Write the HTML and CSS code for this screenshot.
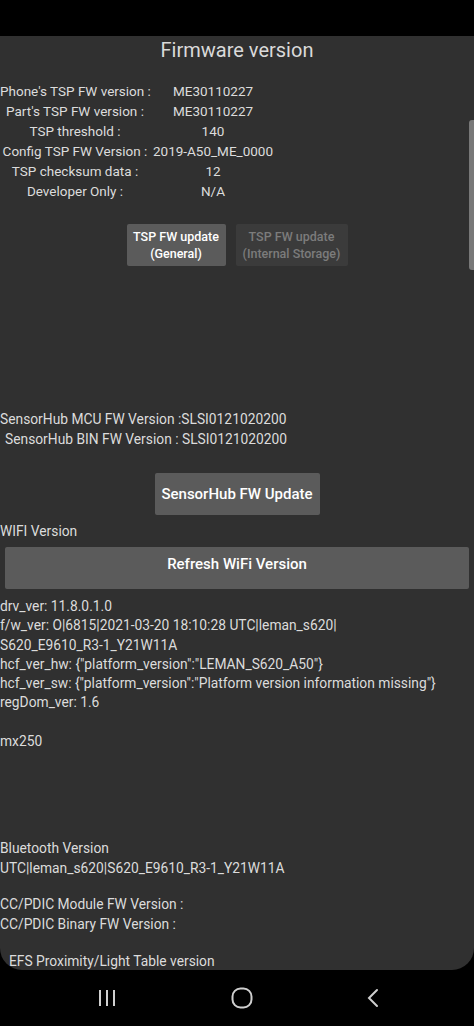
FILE: index.html
```html
<!DOCTYPE html>
<html>
<head>
<meta charset="utf-8">
<link rel="stylesheet" href="styles.css">
</head>
<body>
<div class="status"></div>
<div class="panel">
  <div class="title">Firmware version</div>
  <div class="tsp">
    <div class="lbl">Phone's TSP FW version :</div><div class="val">ME30110227</div>
    <div class="lbl">Part's TSP FW version :</div><div class="val">ME30110227</div>
    <div class="lbl">TSP threshold :</div><div class="val">140</div>
    <div class="lbl">Config TSP FW Version :</div><div class="val">2019-A50_ME_0000</div>
    <div class="lbl">TSP checksum data :</div><div class="val">12</div>
    <div class="lbl">Developer Only :</div><div class="val">N/A</div>
  </div>
  <div class="btnrow">
    <div class="btn small general">TSP FW update<br>(General)</div>
    <div class="btn small disabled">TSP FW update<br>(Internal Storage)</div>
  </div>
  <div class="sensor">
    <div class="line">SensorHub MCU FW Version :SLSI0121020200</div>
    <div class="line ind">SensorHub BIN FW Version : SLSI0121020200</div>
  </div>
  <div class="btnrow">
    <div class="btn big">SensorHub FW Update</div>
  </div>
  <div class="line wifi-h">WIFI Version</div>
  <div class="btn wide">Refresh WiFi Version</div>
  <div class="wifi">
    <div class="l">drv_ver: 11.8.0.1.0</div>
    <div class="l">f/w_ver: O|6815|2021-03-20 18:10:28 UTC|leman_s620|</div>
    <div class="l">S620_E9610_R3-1_Y21W11A</div>
    <div class="l">hcf_ver_hw: {"platform_version":"LEMAN_S620_A50"}</div>
    <div class="l">hcf_ver_sw: {"platform_version":"Platform version information missing"}</div>
    <div class="l">regDom_ver: 1.6</div>
    <div class="l mx">mx250</div>
  </div>
  <div class="bt">
    <div class="line">Bluetooth Version</div>
    <div class="line">UTC|leman_s620|S620_E9610_R3-1_Y21W11A</div>
  </div>
  <div class="cc">
    <div class="line">CC/PDIC Module FW Version :</div>
    <div class="line">CC/PDIC Binary FW Version :</div>
  </div>
  <div class="line efs">EFS Proximity/Light Table version</div>
  <div class="scrollbar"></div>
</div>
<div class="nav">
  <svg class="ic" width="20" height="20" viewBox="0 0 20 20"><path d="M3 2v16M10 2v16M17 2v16" stroke="#cfcfcf" stroke-width="2" fill="none"/></svg>
  <svg class="ic" width="22" height="22" viewBox="0 0 22 22"><rect x="1.5" y="1.5" width="19" height="19" rx="8" stroke="#cfcfcf" stroke-width="2" fill="none"/></svg>
  <svg class="ic" width="14" height="22" viewBox="0 0 14 22"><path d="M11 3L3 11l8 8" stroke="#cfcfcf" stroke-width="2" fill="none" stroke-linecap="round"/></svg>
</div>
</body>
</html>
```
FILE: styles.css
```css
* {
  box-sizing: border-box;
}
html, body {
  margin: 0;
  padding: 0;
  background: #000;
}
body {
  width: 474px;
  height: 1026px;
  overflow: hidden;
  font-family: Roboto, "Open Sans", sans-serif;
  color: #dcdcdc;
}
.status {
  height: 36px;
  background: #000;
}
.panel {
  position: relative;
  height: 934px;
  background: #303030;
  border-radius: 0 0 22px 22px;
  overflow: hidden;
}
.title {
  height: 28px;
  line-height: 28px;
  text-align: center;
  font-size: 20px;
  color: #dadada;
}
.tsp {
  margin-top: 17px;
  display: grid;
  grid-template-columns: 150px 126px;
  font-size: 13.5px;
  line-height: 20px;
}
.lbl, .val {
  text-align: center;
  white-space: nowrap;
}
.btnrow {
  display: flex;
  justify-content: center;
  gap: 10px;
}
.tsp + .btnrow {
  margin-top: 23px;
}
.btn {
  background: #5b5b5b;
  color: #fff;
  border-radius: 2px;
  display: flex;
  align-items: center;
  justify-content: center;
  text-align: center;
  font-weight: 500;
  height: 42px;
  white-space: nowrap;
}
.btn.small {
  font-size: 12.5px;
  line-height: 17px;
}
.btn.general {
  width: 99px;
}
.btn.disabled {
  background: #3b3b3b;
  color: #7c7c7c;
  width: 112px;
}
.sensor {
  margin-top: 143px;
}
.line {
  font-size: 13.8px;
  line-height: 20px;
  white-space: nowrap;
}
.ind {
  padding-left: 5px;
}
.sensor + .btnrow {
  margin-top: 24px;
}
.btn.big {
  width: 165px;
  font-size: 15px;
}
.wifi-h {
  margin-top: 6px;
}
.btn.wide {
  margin: 6px 5px 0;
  font-size: 15px;
  padding-bottom: 8px;
}
.wifi {
  margin-top: 8px;
  font-size: 13.8px;
  line-height: 19.3px;
}
.wifi .l {
  white-space: nowrap;
}
.wifi .mx {
  margin-top: 19px;
}
.bt {
  margin-top: 87px;
}
.cc {
  margin-top: 16px;
}
.efs {
  margin-top: 17px;
  padding-left: 9px;
}
.scrollbar {
  position: absolute;
  right: 0;
  top: 84px;
  width: 5px;
  height: 150px;
  background: #787878;
  border-radius: 3px 0 0 3px;
}
.nav {
  height: 56px;
  display: flex;
  align-items: center;
  justify-content: space-between;
  padding: 0 94px 0 97px;
}
```
